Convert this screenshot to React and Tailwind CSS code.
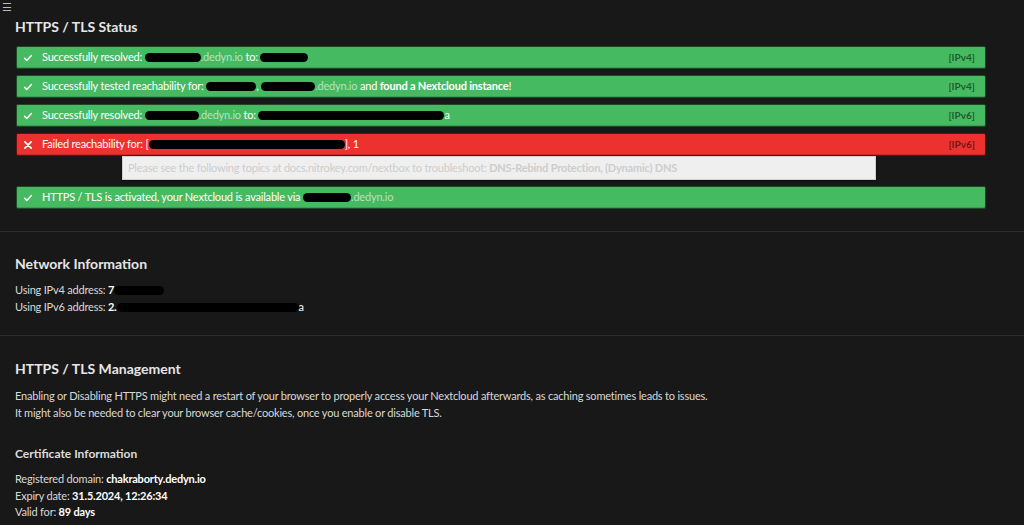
import React from 'react'

const font = { fontFamily: 'Lato, "Noto Sans", sans-serif' }

const Blot = ({ w }) => (
  <span className="inline-block h-[9px] rounded-full bg-black align-middle -mt-[2px]" style={{ width: w }} />
)

const Check = () => (
  <svg viewBox="0 0 16 16" className="w-[10px] h-[10px] shrink-0" fill="none" stroke="#fff" strokeWidth="2.4" strokeLinecap="round" strokeLinejoin="round">
    <path d="M2.5 8.5l3.5 3.5 7.5-8" />
  </svg>
)

const Cross = () => (
  <svg viewBox="0 0 16 16" className="w-[10px] h-[10px] shrink-0" fill="none" stroke="#fff" strokeWidth="2.8" strokeLinecap="round">
    <path d="M3 3l10 10M13 3L3 13" />
  </svg>
)

const StatusBar = ({ ok = true, tag, children }) => (
  <div
    className={`flex items-center h-[23px] pl-[6px] pr-[10px] rounded-[2px] border border-black/60 shadow-[inset_0_-1px_0_rgba(0,0,0,0.15)] text-white text-[11px] tracking-[-0.2px] ${
      ok ? 'bg-[#46ba61]' : 'bg-[#ec312f]'
    }`}
  >
    {ok ? <Check /> : <Cross />}
    <span className="ml-[9px] flex-1 whitespace-nowrap">{children}</span>
    {tag && <span className="text-[10px] font-bold tracking-normal text-black/55">[{tag}]</span>}
  </div>
)

const Light = ({ children }) => <span className="text-white/60">{children}</span>

export default function App() {
  return (
    <div className="min-h-screen bg-[#181818] text-[#d8d8d8] relative" style={font}>
      <span className="absolute left-[2px] top-[1px] text-[11px] leading-none text-[#bbb]">☰</span>

      {/* Status */}
      <section className="pl-[15px] pr-[38px] pt-[17px] pb-[22px]">
        <h2 className="text-[14px] font-bold text-[#e6e6e6] leading-[20px] mb-[9px]">HTTPS / TLS Status</h2>
        <div className="flex flex-col gap-[6px] pl-px">
          <StatusBar tag="IPv4">
            Successfully resolved: <Blot w={56} /><Light>.dedyn.io</Light> to: <Blot w={48} />
          </StatusBar>
          <StatusBar tag="IPv4">
            Successfully tested reachability for: <Blot w={50} />, <Blot w={54} /><Light>.dedyn.io</Light> and <b>found a Nextcloud instance</b>!
          </StatusBar>
          <StatusBar tag="IPv6">
            Successfully resolved: <Blot w={54} /><Light>.dedyn.io</Light> to: <Blot w={186} />a
          </StatusBar>
          <div className="relative mb-[24px]">
            <StatusBar ok={false} tag="IPv6">
              Failed reachability for: [<Blot w={196} />], 1
            </StatusBar>
            <div className="absolute left-[106px] top-[23px] w-[754px] h-[24px] flex items-center pl-[5px] bg-[#efefef] border border-[#cfcfcf] shadow-[0_1px_2px_rgba(0,0,0,0.6)] text-[11px] tracking-[-0.2px] text-[#cdcdcd] whitespace-nowrap">
              Please see the following topics at docs.nitrokey.com/nextbox to troubleshoot:&nbsp;<span className="font-bold">DNS-Rebind Protection, (Dynamic) DNS</span>
            </div>
          </div>
          <StatusBar tag="">
            HTTPS / TLS is activated, your Nextcloud is available via <Blot w={48} /><Light>.dedyn.io</Light>
          </StatusBar>
        </div>
      </section>

      <div className="border-t border-[#2c2c2c]" />

      {/* Network */}
      <section className="px-[15px] pt-[22px] pb-[20px] text-[11px] tracking-[-0.2px] leading-[17px]">
        <h2 className="text-[14px] font-bold tracking-normal text-[#e6e6e6] leading-[20px] mb-[7px]">Network Information</h2>
        <p>Using IPv4 address: <b className="text-white">7</b><Blot w={50} /></p>
        <p>Using IPv6 address: <b className="text-white">2.</b><Blot w={182} /><span className="text-white">a</span></p>
      </section>

      <div className="border-t border-[#2c2c2c]" />

      {/* Management */}
      <section className="px-[15px] pt-[23px] text-[11px] tracking-[-0.2px] leading-[16.5px]">
        <h2 className="text-[14px] font-bold tracking-normal text-[#e6e6e6] leading-[20px] mb-[9px]">HTTPS / TLS Management</h2>
        <p>Enabling or Disabling HTTPS might need a restart of your browser to properly access your Nextcloud afterwards, as caching sometimes leads to issues.</p>
        <p>It might also be needed to clear your browser cache/cookies, once you enable or disable TLS.</p>
        <h3 className="mt-[24px] mb-[8px] text-[12px] tracking-normal leading-[18px] font-bold text-[#dcdcdc]">Certificate Information</h3>
        <p>Registered domain: <b className="text-white">chakraborty.dedyn.io</b></p>
        <p>Expiry date: <b className="text-white">31.5.2024, 12:26:34</b></p>
        <p>Valid for: <b className="text-white">89 days</b></p>
      </section>
    </div>
  )
}
